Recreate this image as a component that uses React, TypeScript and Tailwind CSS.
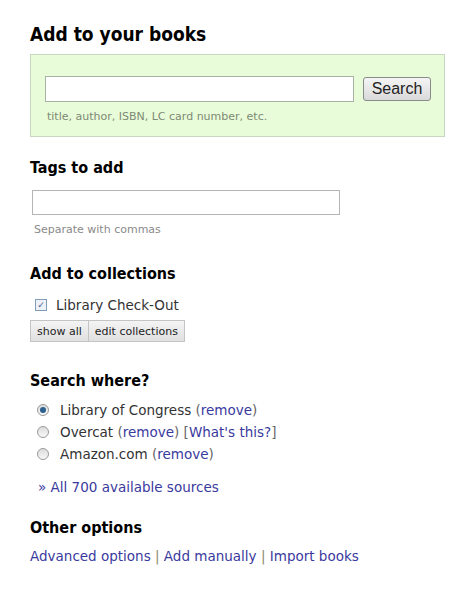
const font = { fontFamily: '"DejaVu Sans", Verdana, sans-serif' };
const heading = { fontFamily: '"DejaVu Sans Condensed", "DejaVu Sans", Tahoma, sans-serif', fontStretch: "semi-condensed" };

function Radio({ checked }: { checked?: boolean }) {
  return (
    <span className="inline-flex h-[12px] w-[12px] shrink-0 items-center justify-center rounded-full border border-[#9a9a9a] bg-gradient-to-b from-[#dcdcdc] to-[#f8f8f8]">
      {checked && <span className="h-[6px] w-[6px] rounded-full bg-[#2d5f8f]" />}
    </span>
  );
}

function Paren({ children }: { children: string }) {
  return (
    <>
      <span className="text-[#666]">(</span>
      <a className="text-[#3a3a9e]">{children}</a>
      <span className="text-[#666]">)</span>
    </>
  );
}

export default function App() {
  return (
    <div className="min-h-[598px] w-[474px] bg-white pl-[30px] pt-[22px] text-[#222]" style={font}>
      <h1 className="text-[19px] font-bold leading-[24px] text-black" style={heading}>
        Add to your books
      </h1>

      <div className="mt-[8px] w-[415px] border border-[#c9d6c0] bg-[#e9fcd9] pb-[11px] pl-[14px] pt-[21px]">
        <div className="flex items-center">
          <input className="h-[26px] w-[309px] border border-[#a9b3a5] bg-white outline-none" />
          <button
            className="ml-[9px] h-[24px] w-[68px] rounded-[3px] border border-[#8b8b8b] bg-gradient-to-b from-[#f5f5f5] to-[#d9d9d9] text-[16px] leading-none text-[#222]"
            style={{ fontFamily: '"Liberation Sans", Arial, sans-serif' }}
          >
            Search
          </button>
        </div>
        <p className="mt-[7px] pl-[2px] text-[11px] leading-[16px] text-[#7d8a75]">title, author, ISBN, LC card number, etc.</p>
      </div>

      <h2 className="mt-[21px] text-[16px] font-bold leading-[20px] text-black" style={heading}>
        Tags to add
      </h2>
      <input className="ml-[2px] mt-[12px] block h-[25px] w-[308px] border border-[#b5b5b5] bg-white outline-none" />
      <p className="mt-[7px] pl-[4px] text-[11px] leading-[16px] text-[#8a8a8a]">Separate with commas</p>

      <h2 className="mt-[26px] text-[16px] font-bold leading-[20px] text-black" style={heading}>
        Add to collections
      </h2>
      <label className="mt-[12px] flex items-center pl-[5px] text-[13.5px] leading-[18px] text-[#333]">
        <span className="mr-[9px] flex h-[12px] w-[12px] items-center justify-center border border-[#7f9db9] bg-[#eef2f8] text-[9px] leading-none text-[#4a5fa0]">
          ✓
        </span>
        Library Check-Out
      </label>
      <div className="mt-[6px] flex text-[11px] leading-none text-[#222]">
        <button className="h-[22px] border border-[#c4c4c4] bg-gradient-to-b from-[#f4f4f4] to-[#e0e0e0] px-[6px]">show all</button>
        <button className="-ml-px h-[22px] border border-[#c4c4c4] bg-gradient-to-b from-[#f4f4f4] to-[#e0e0e0] px-[6px]">
          edit collections
        </button>
      </div>

      <h2 className="mt-[29px] text-[16px] font-bold leading-[20px] text-black" style={heading}>
        Search where?
      </h2>
      <ul className="mt-[10px] flex flex-col gap-[4px] pl-[7px] text-[13.5px] leading-[18px] text-[#333]">
        <li className="flex items-center gap-[11px]">
          <Radio checked />
          <span>
            Library of Congress <Paren>remove</Paren>
          </span>
        </li>
        <li className="flex items-center gap-[11px]">
          <Radio />
          <span>
            Overcat <Paren>remove</Paren> <span className="text-[#666]">[</span>
            <a className="text-[#3a3a9e]">What's this?</a>
            <span className="text-[#666]">]</span>
          </span>
        </li>
        <li className="flex items-center gap-[11px]">
          <Radio />
          <span>
            Amazon.com <Paren>remove</Paren>
          </span>
        </li>
      </ul>
      <p className="mt-[15px] pl-[8px] text-[13.5px] leading-[18px] text-[#3a3a9e]">» All 700 available sources</p>

      <h2 className="mt-[22px] text-[16px] font-bold leading-[20px] text-black" style={heading}>
        Other options
      </h2>
      <p className="mt-[9px] text-[13.5px] leading-[18px] text-[#3a3a9e]">
        <a>Advanced options</a> <span className="text-[#8a8a6a]">|</span> <a>Add manually</a>{" "}
        <span className="text-[#8a8a6a]">|</span> <a>Import books</a>
      </p>
    </div>
  );
}
